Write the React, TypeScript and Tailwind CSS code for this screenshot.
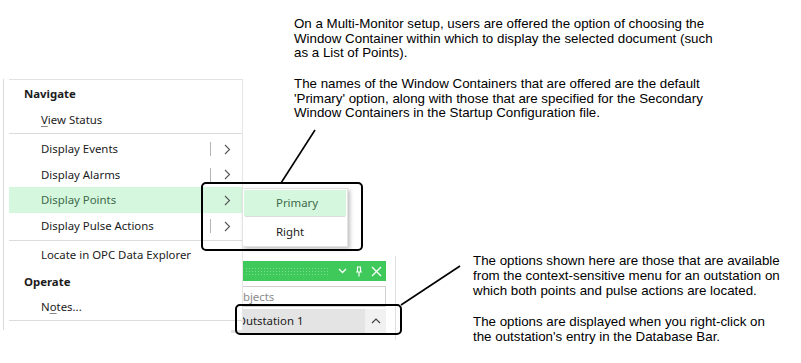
import React from 'react';

const menuFont = { fontFamily: '"Noto Sans", "Open Sans", sans-serif' };

function Chevron() {
  return (
    <svg width="7" height="11" viewBox="0 0 7 11" className="text-[#555]">
      <path d="M1 1 L5.5 5.5 L1 10" fill="none" stroke="currentColor" strokeWidth="1.1" />
    </svg>
  );
}

function MenuItem({
  label,
  h,
  sub,
  bar = true,
  active = false,
  underline,
}: {
  label: string;
  h: string;
  sub?: boolean;
  bar?: boolean;
  active?: boolean;
  underline?: number;
}) {
  const text =
    underline === undefined ? (
      label
    ) : (
      <>
        {label.slice(0, underline)}
        <span className="underline underline-offset-2 decoration-[#888]">{label[underline]}</span>
        {label.slice(underline + 1)}
      </>
    );
  return (
    <div
      className={`${h} flex items-center pl-[32px] pr-[11px] ${
        active ? 'bg-[#d5f7dd] text-[#3d6a4b]' : 'text-[#1b1b1b]'
      }`}
    >
      <span className="flex-1 whitespace-nowrap">{text}</span>
      {sub && (
        <div className="flex items-center">
          <span className={`w-px h-[14px] mr-[13px] ${bar ? 'bg-[#b5b5b5]' : 'bg-transparent'}`} />
          <Chevron />
        </div>
      )}
    </div>
  );
}

function Separator({ h }: { h: string }) {
  return (
    <div className={`${h} flex items-center`}>
      <div className="h-px w-full bg-[#dcdcdc]" />
    </div>
  );
}

function Header({ label, h }: { label: string; h: string }) {
  return (
    <div className={`${h} flex items-center pl-[15px] font-bold text-[#1b1b1b]`}>{label}</div>
  );
}

function ContextMenu() {
  return (
    <div
      className="absolute left-[3px] top-[79px] w-[240px] h-[251px] bg-white border-l border-[#dadada] pl-[5px] text-[11.4px] z-10"
      style={menuFont}
    >
      <div className="border-t border-[#e2e2e2] border-r border-r-[#e6e6e6] h-full">
        <Header label="Navigate" h="h-[28px]" />
        <MenuItem label="View Status" h="h-[23px]" underline={0} />
        <Separator h="h-[5px]" />
        <MenuItem label="Display Events" h="h-[26px]" sub />
        <MenuItem label="Display Alarms" h="h-[25px]" sub />
        <MenuItem label="Display Points" h="h-[26px]" sub bar={false} active />
        <MenuItem label="Display Pulse Actions" h="h-[26px]" sub />
        <Separator h="h-[3px]" />
        <MenuItem label="Locate in OPC Data Explorer" h="h-[26px]" />
        <Header label="Operate" h="h-[27px]" />
        <MenuItem label="Notes..." h="h-[24px]" underline={1} />
        <Separator h="h-[3px]" />
      </div>
    </div>
  );
}

function SubMenu() {
  return (
    <div
      className="absolute left-[242px] top-[188px] w-[106px] h-[59px] bg-white border border-[#e3e3e3] shadow-[2px_2px_4px_rgba(0,0,0,0.25)] text-[11.4px] z-20 p-[1px]"
      style={menuFont}
    >
      <div className="h-[26px] flex items-center pl-[32px] bg-[#d5f7dd] text-[#3d6a4b]">Primary</div>
      <div className="h-px bg-[#dcdcdc] mx-[1px]" />
      <div className="h-[29px] flex items-center pl-[32px] text-[#1b1b1b]">Right</div>
    </div>
  );
}

function DatabaseBar() {
  return (
    <div
      className="absolute left-[222px] top-[256px] w-[174px] h-[84px] border-r border-[#e0e0e0] bg-white text-[11.4px]"
      style={menuFont}
    >
      <div className="mt-[5px] ml-[21px] w-[143px] h-[20px] bg-[#3fc95b] flex items-center pl-[2px] pr-[4px]">
        <div className="flex-1 h-[8px] bg-[radial-gradient(circle,#7fdc92_0.6px,transparent_0.9px)] bg-[length:3px_3px]" />
        <div className="flex items-center gap-[8px] ml-[8px] text-white">
          <svg width="9" height="6" viewBox="0 0 9 6">
            <path d="M1 1 L4.5 4.5 L8 1" fill="none" stroke="white" strokeWidth="1.3" />
          </svg>
          <svg width="8" height="11" viewBox="0 0 8 11">
            <path d="M2 1 H6 M2.5 1 V6 M5.5 1 V6 M1 6 H7 M4 6 V10.5" fill="none" stroke="white" strokeWidth="1.2" />
          </svg>
          <svg width="11" height="11" viewBox="0 0 11 11">
            <path d="M1 1 L10 10 M10 1 L1 10" fill="none" stroke="white" strokeWidth="1.3" />
          </svg>
        </div>
      </div>
      <div className="mt-[5px] ml-[9px] w-[155px] h-[21px] border border-[#d0d0d0] flex items-center pl-[2px] text-[#8a8a8a]">
        Objects
      </div>
      <div className="mt-[2px] ml-[9px] w-[155px] h-[24px] bg-[#e4e4e4] flex items-center pl-[6px] text-[#1b1b1b]">
        <span className="flex-1">Outstation 1</span>
        <div className="w-[21px] h-full bg-[#f1f1f1] flex items-center justify-center">
          <svg width="10" height="6" viewBox="0 0 10 6">
            <path d="M1 5 L5 1 L9 5" fill="none" stroke="#444" strokeWidth="1.2" />
          </svg>
        </div>
      </div>
    </div>
  );
}

function Callouts() {
  return (
    <svg className="absolute left-0 top-0 z-30 pointer-events-none" width="801" height="363">
      <rect x="202" y="183" width="160" height="67" rx="4" fill="none" stroke="#000" strokeWidth="2" />
      <line x1="281" y1="183" x2="315" y2="130" stroke="#000" strokeWidth="1.6" />
      <rect x="236" y="305" width="165" height="29" rx="4" fill="none" stroke="#000" strokeWidth="2" />
      <line x1="401" y1="305" x2="460" y2="266" stroke="#000" strokeWidth="1.6" />
    </svg>
  );
}

const noteFont = { fontFamily: '"Liberation Sans", Arial, sans-serif' };

export default function App() {
  return (
    <div className="relative w-[801px] h-[363px] bg-white overflow-hidden">
      <div
        className="absolute left-[294px] top-[17px] text-[13.33px] leading-[14.6px] text-black whitespace-nowrap"
        style={noteFont}
      >
        <p>
          On a Multi-Monitor setup, users are offered the option of choosing the
          <br />
          Window Container within which to display the selected document (such
          <br />
          as a List of Points).
        </p>
        <p className="mt-[16.5px]">
          The names of the Window Containers that are offered are the default
          <br />
          'Primary' option, along with those that are specified for the Secondary
          <br />
          Window Containers in the Startup Configuration file.
        </p>
      </div>

      <div
        className="absolute left-[473px] top-[254px] text-[13.33px] leading-[14.8px] text-black whitespace-nowrap"
        style={noteFont}
      >
        <p>
          The options shown here are those that are available
          <br />
          from the context-sensitive menu for an outstation on
          <br />
          which both points and pulse actions are located.
        </p>
        <p className="mt-[17px]">
          The options are displayed when you right-click on
          <br />
          the outstation's entry in the Database Bar.
        </p>
      </div>

      <DatabaseBar />
      <ContextMenu />
      <SubMenu />
      <Callouts />
    </div>
  );
}
